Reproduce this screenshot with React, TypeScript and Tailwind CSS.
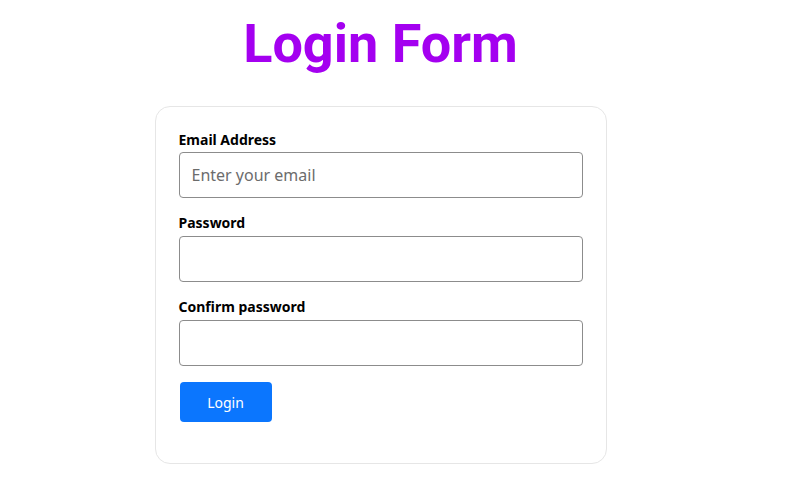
import React from "react";

export default function App() {
  return (
    <div className="min-h-[486px] w-full bg-white">
      <div className="w-[761px] flex flex-col items-center">
        <h1 className="mt-[11px] text-[54px] leading-[66px] font-bold text-[#a400f0] [font-family:Roboto,sans-serif]">
          Login Form
        </h1>
        <div className="mt-[29px] w-[452px] rounded-[15px] border border-[#e6e6e6] px-[23px] pt-[22px] pb-[41px] [font-family:'Noto_Sans',sans-serif]">
          <label className="block text-[14px] leading-[21px] font-bold text-black mb-[2px]">Email Address</label>
          <input
            type="email"
            placeholder="Enter your email"
            className="block w-[404px] h-[46px] rounded-[4px] border border-[#8c8c8c] px-[12px] text-[16px] text-black placeholder:text-[#6c6c6c] outline-none"
          />
          <label className="mt-[14px] block text-[14px] leading-[21px] font-bold text-black mb-[3px]">Password</label>
          <input
            type="password"
            className="block w-[404px] h-[46px] rounded-[4px] border border-[#8c8c8c] px-[12px] text-[16px] outline-none"
          />
          <label className="mt-[14px] block text-[14px] leading-[21px] font-bold text-black mb-[3px]">Confirm password</label>
          <input
            type="password"
            className="block w-[404px] h-[46px] rounded-[4px] border border-[#8c8c8c] px-[12px] text-[16px] outline-none"
          />
          <button
            type="button"
            className="mt-[16px] ml-[1px] block w-[92px] h-[40px] rounded-[4px] bg-[#0b76fe] text-white text-[14px]"
          >
            Login
          </button>
        </div>
      </div>
    </div>
  );
}
